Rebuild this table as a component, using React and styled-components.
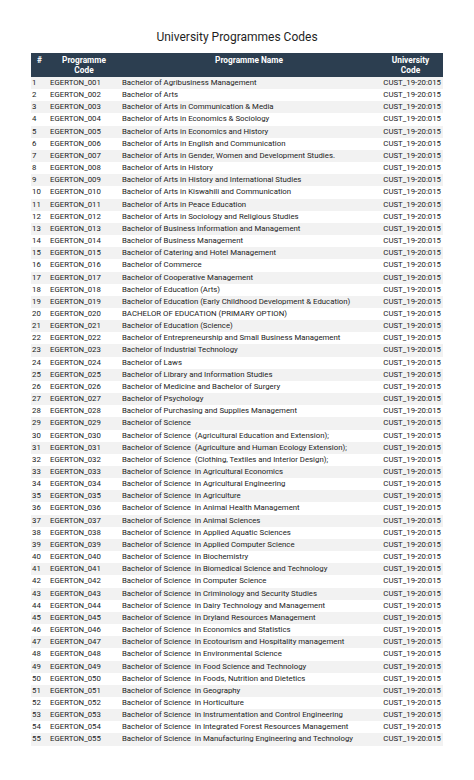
import React from "react";
import styled, { createGlobalStyle } from "styled-components";

const GlobalStyle = createGlobalStyle`
  html, body {
    margin: 0;
    padding: 0;
    background: #ffffff;
  }
  body {
    font-family: Roboto, "Liberation Sans", Arial, sans-serif;
    color: #222222;
  }
`;

const Page = styled.div`
  width: 474px;
  padding: 28px 31px 0 31px;
  box-sizing: border-box;
`;

const Title = styled.h1`
  margin: 0 0 7px 0;
  font-size: 12px;
  font-weight: 400;
  line-height: 18px;
  text-align: center;
  color: #1f1f1f;
`;

const Table = styled.div`
  display: grid;
  grid-template-columns: 17px 72px 258px 65px;
  width: 412px;
`;

const HeadCell = styled.div`
  background: #2c3e50;
  color: #ffffff;
  font-size: 8.3px;
  font-weight: 700;
  line-height: 10px;
  padding: 2px 2px;
  text-align: center;
  display: flex;
  align-items: flex-start;
  justify-content: center;
`;

const Cell = styled.div`
  background: ${(p) => (p.$odd ? "#f2f2f2" : "#ffffff")};
  font-size: 7.8px;
  line-height: 12.16px;
  height: 12.16px;
  padding: 0 2px 0 ${(p) => (p.$first ? "1px" : "2px")};
  text-align: ${(p) => (p.$right ? "right" : "left")};
  white-space: pre;
  overflow: hidden;
  color: #222222;
`;

const names = [
  "Bachelor of Agribusiness Management",
  "Bachelor of Arts",
  "Bachelor of Arts in Communication & Media",
  "Bachelor of Arts in Economics & Sociology",
  "Bachelor of Arts in Economics and History",
  "Bachelor of Arts in English and Communication",
  "Bachelor of Arts in Gender, Women and Development Studies.",
  "Bachelor of Arts in History",
  "Bachelor of Arts in History and International Studies",
  "Bachelor of Arts in Kiswahili and Communication",
  "Bachelor of Arts in Peace Education",
  "Bachelor of Arts in Sociology and Religious Studies",
  "Bachelor of Business Information and Management",
  "Bachelor of Business Management",
  "Bachelor of Catering and Hotel Management",
  "Bachelor of Commerce",
  "Bachelor of Cooperative Management",
  "Bachelor of Education (Arts)",
  "Bachelor of Education (Early Childhood Development & Education)",
  "BACHELOR OF EDUCATION (PRIMARY OPTION)",
  "Bachelor of Education (Science)",
  "Bachelor of Entrepreneurship and Small Business Management",
  "Bachelor of Industrial Technology",
  "Bachelor of Laws",
  "Bachelor of Library and Information Studies",
  "Bachelor of Medicine and Bachelor of Surgery",
  "Bachelor of Psychology",
  "Bachelor of Purchasing and Supplies Management",
  "Bachelor of Science",
  "Bachelor of Science  (Agricultural Education and Extension);",
  "Bachelor of Science  (Agriculture and Human Ecology Extension);",
  "Bachelor of Science  (Clothing, Textiles and Interior Design);",
  "Bachelor of Science  in Agricultural Economics",
  "Bachelor of Science  in Agricultural Engineering",
  "Bachelor of Science  in Agriculture",
  "Bachelor of Science  in Animal Health Management",
  "Bachelor of Science  in Animal Sciences",
  "Bachelor of Science  in Applied Aquatic Sciences",
  "Bachelor of Science  in Applied Computer Science",
  "Bachelor of Science  in Biochemistry",
  "Bachelor of Science  in Biomedical Science and Technology",
  "Bachelor of Science  in Computer Science",
  "Bachelor of Science  in Criminology and Security Studies",
  "Bachelor of Science  in Dairy Technology and Management",
  "Bachelor of Science  in Dryland Resources Management",
  "Bachelor of Science  in Economics and Statistics",
  "Bachelor of Science  in Ecotourism and Hospitality management",
  "Bachelor of Science  in Environmental Science",
  "Bachelor of Science  in Food Science and Technology",
  "Bachelor of Science  in Foods, Nutrition and Dietetics",
  "Bachelor of Science  in Geography",
  "Bachelor of Science  in Horticulture",
  "Bachelor of Science  in Instrumentation and Control Engineering",
  "Bachelor of Science  in Integrated Forest Resources Management",
  "Bachelor of Science  in Manufacturing Engineering and Technology",
];

const programmes = names.map((name, i) => ({
  no: i + 1,
  code: "EGERTON_" + String(i + 1).padStart(3, "0"),
  name,
  uni: "CUST_19-20:015",
}));

export default function App() {
  return (
    <Page>
      <GlobalStyle />
      <Title>University Programmes Codes</Title>
      <Table>
        <HeadCell>#</HeadCell>
        <HeadCell>
          Programme
          <br />
          Code
        </HeadCell>
        <HeadCell>Programme Name</HeadCell>
        <HeadCell>
          University
          <br />
          Code
        </HeadCell>
        {programmes.map((p) => {
          const odd = p.no % 2 === 1;
          return (
            <React.Fragment key={p.no}>
              <Cell $odd={odd} $first>
                {p.no}
              </Cell>
              <Cell $odd={odd}>{p.code}</Cell>
              <Cell $odd={odd}>{p.name}</Cell>
              <Cell $odd={odd} $right>
                {p.uni}
              </Cell>
            </React.Fragment>
          );
        })}
      </Table>
    </Page>
  );
}
